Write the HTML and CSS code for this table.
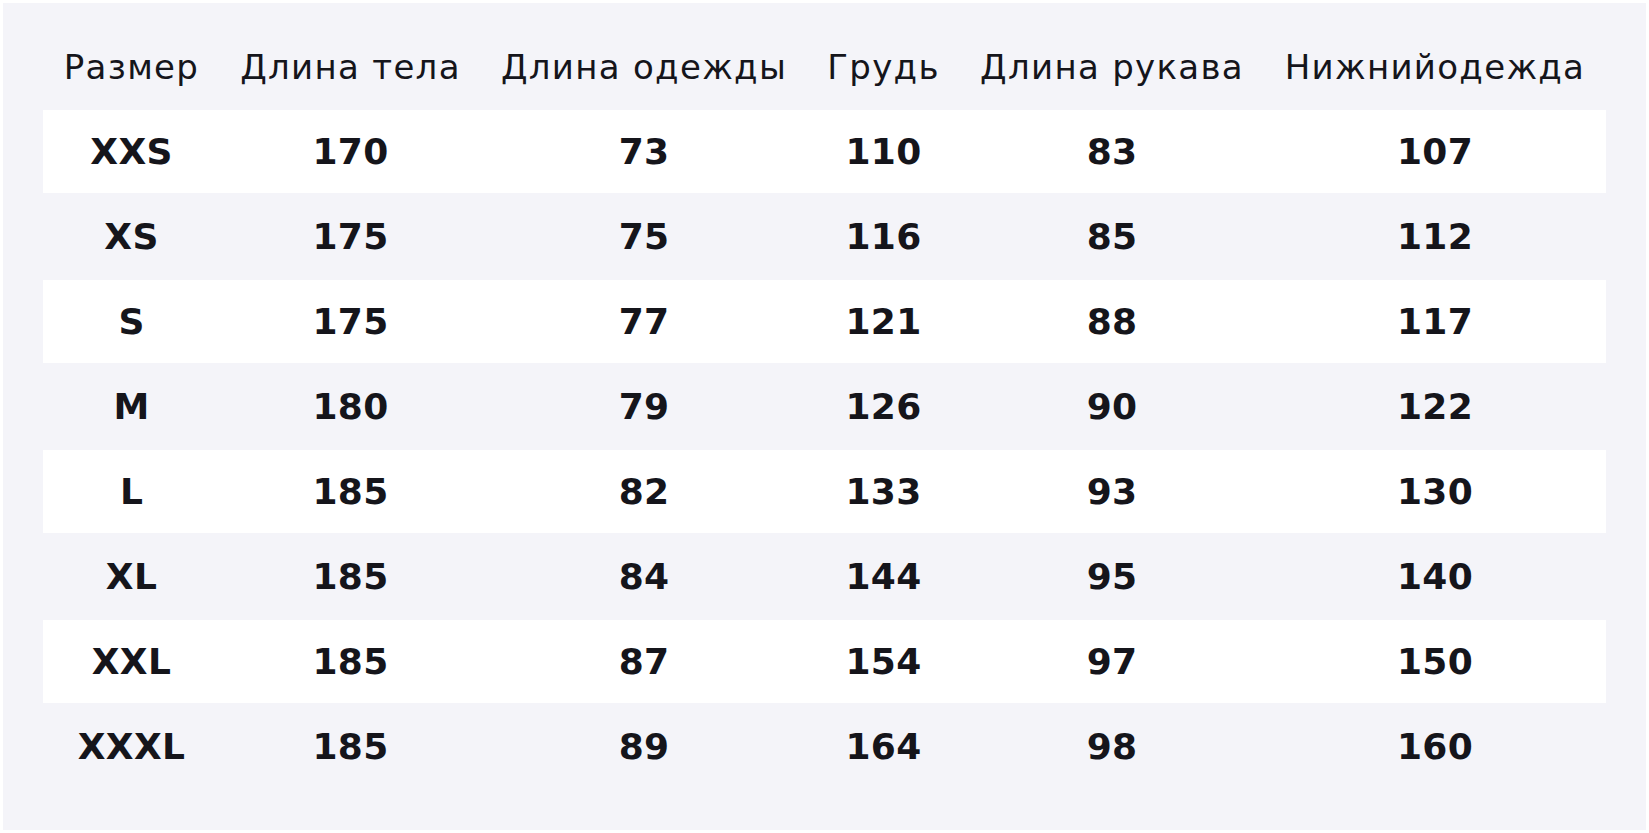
FILE: index.html
```html
<!DOCTYPE html>
<html lang="ru">
<head>
<meta charset="utf-8">
<title>Размеры</title>
<link rel="stylesheet" href="styles.css">
</head>
<body>
<div class="panel">
<table class="sizes">
<colgroup>
<col class="c1"><col class="c2"><col class="c3"><col class="c4"><col class="c5"><col class="c6">
</colgroup>
<thead>
<tr><th>Размер</th><th>Длина тела</th><th>Длина одежды</th><th>Грудь</th><th>Длина рукава</th><th>Нижнийодежда</th></tr>
</thead>
<tbody>
<tr><td>XXS</td><td>170</td><td>73</td><td>110</td><td>83</td><td>107</td></tr>
<tr><td>XS</td><td>175</td><td>75</td><td>116</td><td>85</td><td>112</td></tr>
<tr><td>S</td><td>175</td><td>77</td><td>121</td><td>88</td><td>117</td></tr>
<tr><td>M</td><td>180</td><td>79</td><td>126</td><td>90</td><td>122</td></tr>
<tr><td>L</td><td>185</td><td>82</td><td>133</td><td>93</td><td>130</td></tr>
<tr><td>XL</td><td>185</td><td>84</td><td>144</td><td>95</td><td>140</td></tr>
<tr><td>XXL</td><td>185</td><td>87</td><td>154</td><td>97</td><td>150</td></tr>
<tr><td>XXXL</td><td>185</td><td>89</td><td>164</td><td>98</td><td>160</td></tr>
</tbody>
</table>
</div>
</body>
</html>
```
FILE: styles.css
```css
html, body {
  background: #ffffff;
}
body {
  margin: 3px;
  font-family: "DejaVu Sans", Verdana, sans-serif;
  color: #15151b;
}
.panel {
  background: #f4f4f9;
  padding: 38px 40px 40px;
}
.sizes {
  width: 100%;
  table-layout: fixed;
  border-collapse: separate;
  border-spacing: 0 2px;
}
.c1 { width: 177px; }
.c2 { width: 261px; }
.c3 { width: 326px; }
.c4 { width: 153px; }
.c5 { width: 304px; }
.c6 { width: 342px; }
.sizes th {
  font-weight: normal;
  font-size: 34px;
  letter-spacing: 1.3px;
  line-height: 40px;
  height: 65px;
  padding: 0;
  vertical-align: top;
  box-sizing: border-box;
  padding-top: 4px;
  text-align: center;
  white-space: nowrap;
}
.sizes td {
  font-weight: bold;
  font-size: 36px;
  letter-spacing: 0.3px;
  height: 83px;
  padding: 0;
  text-align: center;
  vertical-align: middle;
}
.sizes tbody tr:nth-child(odd) td {
  background: #ffffff;
}
```
